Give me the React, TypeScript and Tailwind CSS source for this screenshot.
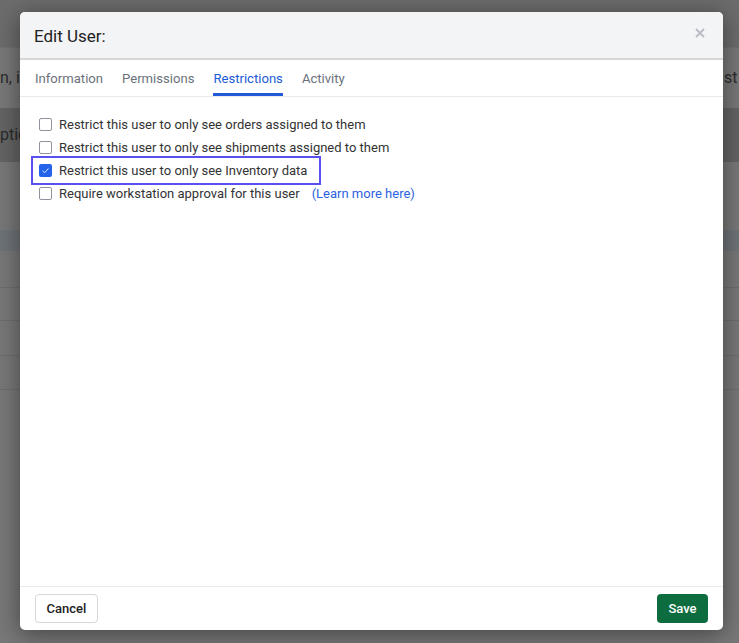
import React from "react";

interface RowProps {
    label: string;
    checked?: boolean;
    highlight?: boolean;
    children?: React.ReactNode;
}

const CheckRow: React.FC<RowProps> = ({label, checked, highlight, children}) => {
    return (
        <div className="flex h-[23px]">
            <label
                className={
                    "flex items-center gap-[7px] pl-[5px] pr-[11px] " +
                    (highlight ? "outline-2 outline-offset-[1px] outline-[#5a4ff0]" : "")
                }
            >
                {checked ? (
                    <span className="flex h-[13px] w-[13px] items-center justify-center rounded-[2px] bg-[#2563eb]">
                        <svg viewBox="0 0 12 12" className="h-[9px] w-[9px]" fill="none" stroke="#dbe6ff" strokeWidth="1.3">
                            <path d="M2 6.3 L4.8 9 L10 3.2" />
                        </svg>
                    </span>
                ) : (
                    <span className="h-[13px] w-[13px] rounded-[2px] border border-[#8f949c] bg-white" />
                )}
                <span className="text-[13px] text-[#333]">{label}</span>
            </label>
            {children}
        </div>
    );
};

const tabs = ["Information", "Permissions", "Restrictions", "Activity"];

export default function App() {
    return (
        <div className="relative h-[643px] w-[739px] overflow-hidden bg-[#787878] font-['Roboto',sans-serif]">
            {/* dimmed page behind the modal */}
            <div className="h-[48px] border-b border-[#717171] bg-[#6c6c6c]" />
            <div className="grid h-[60px] grid-cols-[724px_1fr] items-center text-[16px] text-[#2b2b2b] whitespace-nowrap">
                <span className="overflow-hidden">n, i</span>
                <span className="overflow-hidden">st</span>
            </div>
            <div className="flex h-[54px] items-center bg-[#646464] text-[16px] text-[#2b2b2b] whitespace-nowrap">
                <span>ptic</span>
            </div>
            <div className="h-[68px]" />
            <div className="h-[21px] bg-[#6e7378]" />
            <div className="h-[37px] border-b border-[#6e6e6e]" />
            <div className="h-[33px] border-b border-[#6e6e6e]" />
            <div className="h-[35px] border-b border-[#6e6e6e]" />
            <div className="h-[34px] border-b border-[#6e6e6e]" />

            {/* modal */}
            <div className="absolute left-[20px] top-[12px] flex h-[618px] w-[703px] flex-col overflow-hidden rounded-[5px] bg-white shadow-[0_4px_24px_rgba(0,0,0,0.45)]">
                <div className="flex h-[48px] shrink-0 items-center justify-between border-b-2 border-[#d6d7d9] bg-[#f3f4f6] pl-[14px] pr-[18px] pt-[4px]">
                    <h2 className="text-[17px] text-[#222]">Edit User:</h2>
                    <svg viewBox="0 0 10 10" className="mb-[8px] h-[10px] w-[10px]" stroke="#b9bdc3" strokeWidth="1.8">
                        <path d="M1 1 L9 9 M9 1 L1 9" />
                    </svg>
                </div>

                <nav className="flex h-[37px] shrink-0 gap-[19px] border-b border-[#e8e9eb] pl-[15px]">
                    {tabs.map((t) => (
                        <div
                            key={t}
                            className={
                                "flex items-center border-b-[3px] pt-[4px] text-[13.1px] " +
                                (t === "Restrictions"
                                    ? "border-[#2159d6] text-[#1d5bd8]"
                                    : "border-transparent text-[#6b717a]")
                            }
                        >
                            {t}
                        </div>
                    ))}
                </nav>

                <div className="flex flex-1 flex-col pl-[14px] pt-[16px]">
                    <CheckRow label="Restrict this user to only see orders assigned to them" />
                    <CheckRow label="Restrict this user to only see shipments assigned to them" />
                    <CheckRow label="Restrict this user to only see Inventory data" checked highlight />
                    <CheckRow label="Require workstation approval for this user">
                        <a href="#" className="ml-[1px] flex items-center text-[13px] text-[#2c63e0]">
                            (Learn more here)
                        </a>
                    </CheckRow>
                </div>

                <div className="flex h-[44px] shrink-0 items-start justify-between border-t border-[#e8e9eb] px-[15px] pt-[7px]">
                    <button className="h-[29px] w-[63px] rounded-[4px] border border-[#d5d7da] bg-white text-[13px] font-medium text-[#222]">
                        Cancel
                    </button>
                    <button className="h-[29px] w-[51px] rounded-[4px] bg-[#0e6d3e] text-[13px] font-medium text-white">
                        Save
                    </button>
                </div>
            </div>
        </div>
    );
}
